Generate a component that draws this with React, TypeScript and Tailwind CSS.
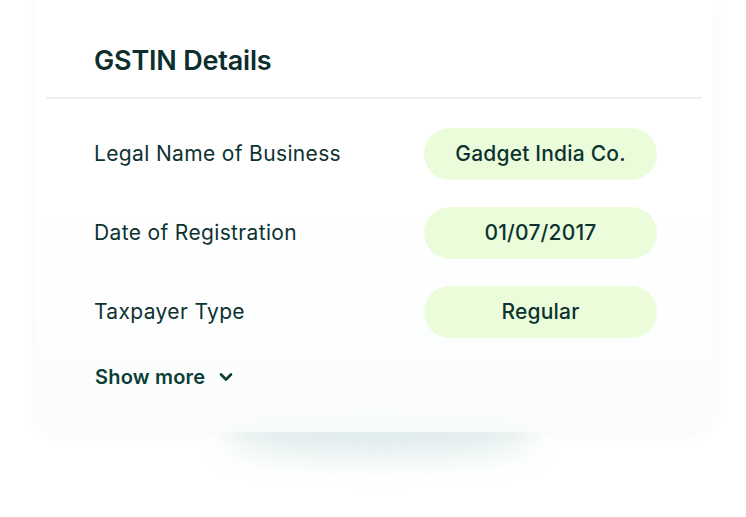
import { ChevronDown } from 'lucide-react';

const rows = [
  { label: 'Legal Name of Business', value: 'Gadget India Co.' },
  { label: 'Date of Registration', value: '01/07/2017' },
  { label: 'Taxpayer Type', value: 'Regular' },
];

export default function App() {
  return (
    <div
      className="relative w-[746px] h-[517px] overflow-hidden bg-white pl-[35px]"
      style={{ fontFamily: 'Inter, "Open Sans", sans-serif' }}
    >
      {/* soft shadow under the card */}
      <div className="absolute left-[225px] top-[418px] w-[310px] h-[40px] rounded-[50%] bg-[#c4dcdc] opacity-50 blur-[14px]" />

      <div className="relative w-[678px] h-[432px] rounded-b-[28px] bg-gradient-to-b from-white via-white to-[#fafcfc]/90 shadow-[0_2px_18px_rgba(20,60,60,0.035)]">
        {/* Header */}
        <div className="h-[97px] pl-[59px] pt-[44px]">
          <h2 className="text-[27px] leading-[34px] font-semibold tracking-[-0.2px] text-[#0c2f2d]">GSTIN Details</h2>
        </div>
        <div className="mx-[11px] h-[2px] bg-[#efefef]" />

        {/* Detail rows */}
        <div className="flex flex-col gap-[27px] pt-[29px] pl-[59px] pr-[56px]">
          {rows.map((r) => (
            <div key={r.label} className="flex items-center justify-between">
              <span className="text-[21px] tracking-[0.35px] text-[#0d3331]">{r.label}</span>
              <span className="flex w-[233px] h-[52px] items-center justify-center rounded-full bg-[#ebfcdb] text-[21px] font-medium tracking-[0.2px] text-[#0d3331]">
                {r.value}
              </span>
            </div>
          ))}
        </div>

        {/* Show more */}
        <button className="mt-[24px] ml-[60px] flex items-center gap-[11px] text-[20px] font-semibold tracking-[0.2px] text-[#0b3f37]">
          Show more
          <ChevronDown className="w-[20px] h-[20px]" strokeWidth={3.2} />
        </button>
      </div>
    </div>
  );
}
